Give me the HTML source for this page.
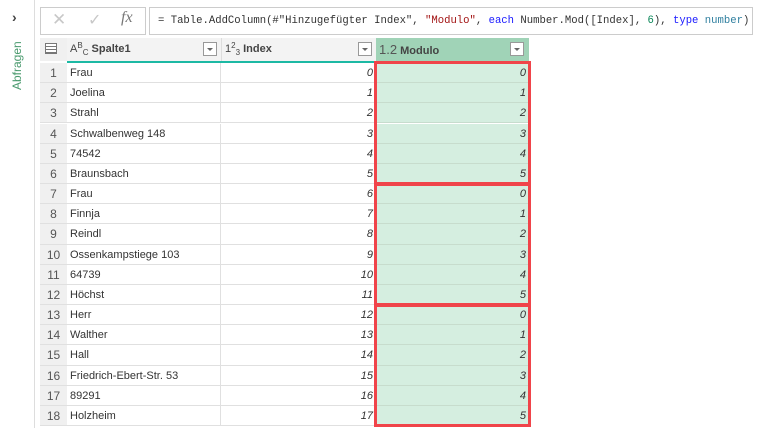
<!DOCTYPE html>
<html><head><meta charset="utf-8"><style>
*{margin:0;padding:0;box-sizing:border-box}
body{width:768px;height:428px;overflow:hidden;background:#fff;font-family:"Liberation Sans",sans-serif;position:relative;color:#333}
.abs{position:absolute}
.row{position:absolute;left:40px;width:489px;height:20.17px;font-size:11px;line-height:21px}
.rn{position:absolute;left:0;width:27px;height:100%;background:#f0f0f0;text-align:center;color:#555;font-size:12px;border-bottom:1px solid #e0e0e0}
.c1{position:absolute;left:27px;width:154px;height:100%;padding-left:3px;border-bottom:1px solid #e0e0e0;border-right:1px solid #e0e0e0}
.c2{position:absolute;left:181px;width:155px;height:100%;text-align:right;padding-right:3px;font-style:italic;border-bottom:1px solid #e0e0e0}
.c3{position:absolute;left:336px;width:153px;height:100%;text-align:right;padding-right:3px;font-style:italic;background:#d5eee0;border-bottom:1px solid #c7dccd}
.box{position:absolute;border:3px solid #f0444a;left:374px;width:157px}
.dd{position:absolute;top:4px;width:14px;height:14px;border:1px solid #999;background:#fff}
.dd:after{content:"";position:absolute;left:3px;top:5px;border-left:3px solid transparent;border-right:3px solid transparent;border-top:3px solid #666}
.hd{position:absolute;top:38px;height:23px;background:#f3f3f3;font-size:11px;font-weight:bold;line-height:23px;padding-left:3px;color:#444;white-space:nowrap}
</style></head><body>
<div class="abs" style="left:34px;top:0;width:1px;height:428px;background:#ddd"></div>
<div class="abs" style="left:12px;top:9px;font-size:14px;color:#444;font-weight:bold">›</div>
<div class="abs" style="left:10px;top:90px;transform:rotate(-90deg);transform-origin:left top;font-size:12px;color:#4a9a6e">Abfragen</div>
<div class="abs" style="left:40px;top:7px;width:106px;height:28px;border:1px solid #ccc"></div>
<div class="abs" style="left:52px;top:10px;font-size:17px;color:#c8c8c8">✕</div>
<div class="abs" style="left:88px;top:10px;font-size:16px;color:#c8c8c8">✓</div>
<div class="abs" style="left:121px;top:9px;font-size:16px;color:#777;font-family:'Liberation Serif',serif;font-style:italic">fx</div>
<div class="abs" style="left:149px;top:7px;width:604px;height:28px;border:1px solid #ccc;font-family:'Liberation Mono',monospace;font-size:10.6px;line-height:26px;padding-left:8px;white-space:nowrap;overflow:hidden;color:#333">= Table.AddColumn(#"Hinzugefügter Index", <span style="color:#a31515">"Modulo"</span>, <span style="color:#1a1aff">each</span> Number.Mod([Index], <span style="color:#098658">6</span>), <span style="color:#1a1aff">type</span> <span style="color:#2f7f9f">number</span>)</div>
<!-- header -->
<div class="abs" style="left:40px;top:38px;width:27px;height:23px;background:#f0f0f0"></div>
<div class="abs" style="left:45px;top:43px;width:12px;height:11px;border:1px solid #777;background:repeating-linear-gradient(#fff 0 2px,#777 2px 3px)"></div>
<div class="hd" style="left:67px;width:154px"><span style="font-weight:normal;font-size:11px;position:relative">A<span style="font-size:8px;position:relative;top:-4px">B</span><span style="font-size:8px;position:relative;top:3px">C</span></span> Spalte1<div class="dd" style="left:136px"></div></div>
<div class="hd" style="left:221px;width:155px;border-left:1px solid #ddd"><span style="font-weight:normal">1<span style="font-size:8px;position:relative;top:-4px">2</span><span style="font-size:8px;position:relative;top:3px">3</span></span> Index<div class="dd" style="left:136px"></div></div>
<div class="hd" style="left:376px;width:153px;background:#a0d3b7"><span style="font-weight:normal;font-size:13px;color:#555">1.2</span> Modulo<div class="dd" style="left:134px"></div></div>
<div class="abs" style="left:67px;top:61px;width:309px;height:2px;background:#1cb9a4"></div>
<div id="rows"></div>
<script>
var n=["Frau","Joelina","Strahl","Schwalbenweg 148","74542","Braunsbach","Frau","Finnja","Reindl","Ossenkampstiege 103","64739","Höchst","Herr","Walther","Hall","Friedrich-Ebert-Str. 53","89291","Holzheim"];
var h="";for(var i=0;i<18;i++){h+='<div class="row" style="top:'+(63+i*20.17)+'px"><div class="rn">'+(i+1)+'</div><div class="c1">'+n[i]+'</div><div class="c2">'+i+'</div><div class="c3">'+(i%6)+'</div></div>';}
document.getElementById("rows").innerHTML=h;
</script>
<div class="box" style="top:61px;height:124px"></div>
<div class="box" style="top:183px;height:123px"></div>
<div class="box" style="top:304px;height:123px"></div>
</body></html>
